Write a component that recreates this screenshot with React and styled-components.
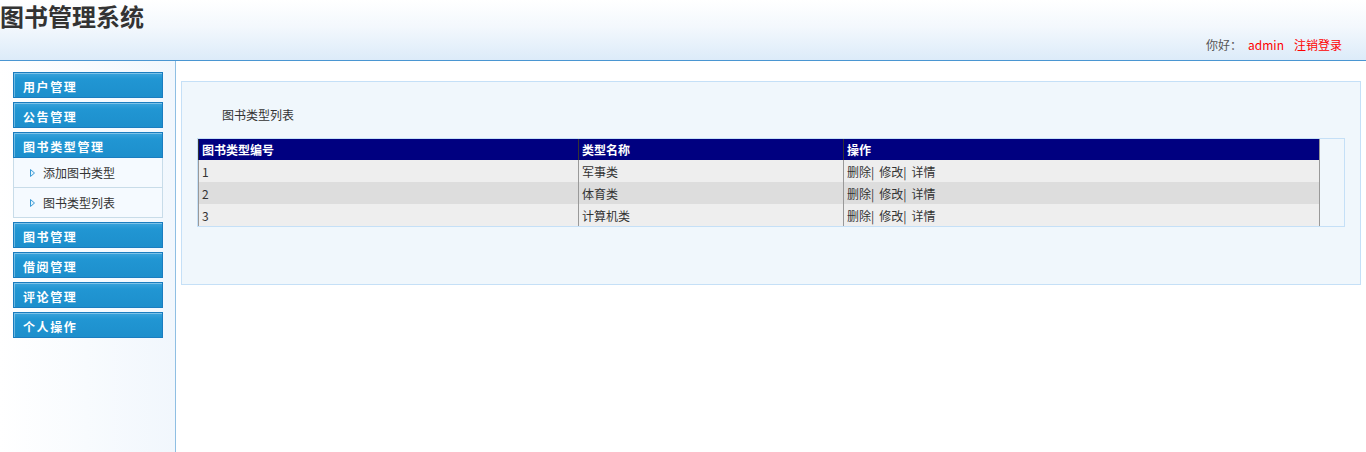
import styled, { createGlobalStyle } from "styled-components";

const GlobalStyle = createGlobalStyle`
  html, body {
    margin: 0;
    padding: 0;
    background: #fff;
    font-family: "Noto Sans CJK SC", "Noto Sans", sans-serif;
    font-size: 12px;
    color: #333;
  }
`;

const Header = styled.div`
  height: 60px;
  border-bottom: 1px solid #4a96d2;
  background: linear-gradient(to bottom, #ffffff 0%, #f3f8fd 45%, #dcebf9 100%);
  display: flex;
  flex-direction: column;
`;

const Title = styled.h1`
  margin: 0;
  font-size: 24px;
  line-height: 32px;
  font-weight: bold;
  color: #333;
`;

const UserBar = styled.div`
  margin-top: 5px;
  display: flex;
  justify-content: flex-end;
  align-items: center;
  padding-right: 24px;
  line-height: 16px;
  color: #555;
`;

const Red = styled.span`
  color: #ff0000;
  margin-left: ${(p) => p.$gap || 0}px;
`;

const Body = styled.div`
  display: flex;
  min-height: calc(100vh - 61px);
`;

const Sidebar = styled.div`
  width: 150px;
  flex-shrink: 0;
  padding: 11px 12px 0 13px;
  border-right: 1px solid #8fbfe3;
  background: linear-gradient(to right, #ffffff 0%, #f1f7fd 100%);
`;

const MenuItem = styled.div`
  box-sizing: border-box;
  height: 26px;
  margin-bottom: ${(p) => (p.$open ? 0 : 4)}px;
  border: 1px solid #1a7dc0;
  background: linear-gradient(to bottom, #3aa3dc 0%, #2196d3 25%, #1d8fcc 100%);
  box-shadow: inset 1px 1px 0 rgba(255, 255, 255, 0.35);
  color: #fff;
  font-weight: bold;
  font-size: 12px;
  line-height: 24px;
  padding: 2px 0 0 9px;
  letter-spacing: 1.6px;
`;

const SubMenu = styled.div`
  margin-bottom: 4px;
  border: 1px solid #c8dce9;
  border-top: none;
  background: #f5faff;
`;

const SubItem = styled.div`
  height: 29px;
  display: flex;
  align-items: center;
  padding-left: 16px;
  color: #333;
  border-top: ${(p) => (p.$first ? "none" : "1px solid #c8dce9")};
`;

const Arrow = styled.svg`
  width: 5px;
  height: 8px;
  margin-right: 8px;
`;

const Main = styled.div`
  flex: 1;
  padding: 20px 5px 0 5px;
`;

const Panel = styled.div`
  border: 1px solid #c5e0f7;
  background: #f0f7fc;
  padding: 23px 15px 57px 15px;
`;

const PanelTitle = styled.div`
  line-height: 20px;
  padding-left: 25px;
  margin-bottom: 13px;
  color: #333;
`;

const TableWrap = styled.div`
  border: 1px solid #c5e0f7;
  padding-right: 24px;
`;

const Table = styled.table`
  width: 100%;
  border-collapse: collapse;
  border-left: 1px solid #999;
  border-right: 1px solid #999;
`;

const Th = styled.th`
  background: #000080;
  color: #fff;
  font-weight: bold;
  text-align: left;
  height: 21px;
  padding: 0 0 0 3px;
  font-size: 12px;
  border-left: 1px solid #333;
  width: ${(p) => p.$w || "auto"};
`;

const Tr = styled.tr`
  background: ${(p) => (p.$alt ? "#dddddd" : "#eeeeee")};
`;

const Td = styled.td`
  height: 22px;
  padding: 0 0 0 3px;
  color: #333;
  border-left: 1px solid #999;
`;

const Op = styled.span`
  color: #333;
  margin-right: 5px;
`;

const menus = ["用户管理", "公告管理"];
const menusAfter = ["图书管理", "借阅管理", "评论管理", "个人操作"];
const rows = [
  { id: 1, name: "军事类" },
  { id: 2, name: "体育类" },
  { id: 3, name: "计算机类" },
];

const ArrowIcon = () => (
  <Arrow viewBox="0 0 5 8">
    <path d="M0.5 0.5 L4.5 4 L0.5 7.5 Z" fill="#e6f3fb" stroke="#3a9bd6" strokeWidth="1" />
  </Arrow>
);

const App = () => {
  return (
    <>
      <GlobalStyle />
      <Header>
        <Title>图书管理系统</Title>
        <UserBar>
          你好：
          <Red $gap={6}>admin</Red>
          <Red $gap={10}>注销登录</Red>
        </UserBar>
      </Header>
      <Body>
        <Sidebar>
          {menus.map((m) => (
            <MenuItem key={m}>{m}</MenuItem>
          ))}
          <MenuItem $open>图书类型管理</MenuItem>
          <SubMenu>
            <SubItem $first>
              <ArrowIcon />
              添加图书类型
            </SubItem>
            <SubItem>
              <ArrowIcon />
              图书类型列表
            </SubItem>
          </SubMenu>
          {menusAfter.map((m) => (
            <MenuItem key={m}>{m}</MenuItem>
          ))}
        </Sidebar>
        <Main>
          <Panel>
            <PanelTitle>图书类型列表</PanelTitle>
            <TableWrap>
              <Table>
                <thead>
                  <tr>
                    <Th $w="376px">图书类型编号</Th>
                    <Th $w="261px">类型名称</Th>
                    <Th>操作</Th>
                  </tr>
                </thead>
                <tbody>
                  {rows.map((r, i) => (
                    <Tr key={r.id} $alt={i % 2 === 1}>
                      <Td>{r.id}</Td>
                      <Td>{r.name}</Td>
                      <Td>
                        <Op>删除|</Op>
                        <Op>修改|</Op>
                        <Op>详情</Op>
                      </Td>
                    </Tr>
                  ))}
                </tbody>
              </Table>
            </TableWrap>
          </Panel>
        </Main>
      </Body>
    </>
  );
};

export default App;
